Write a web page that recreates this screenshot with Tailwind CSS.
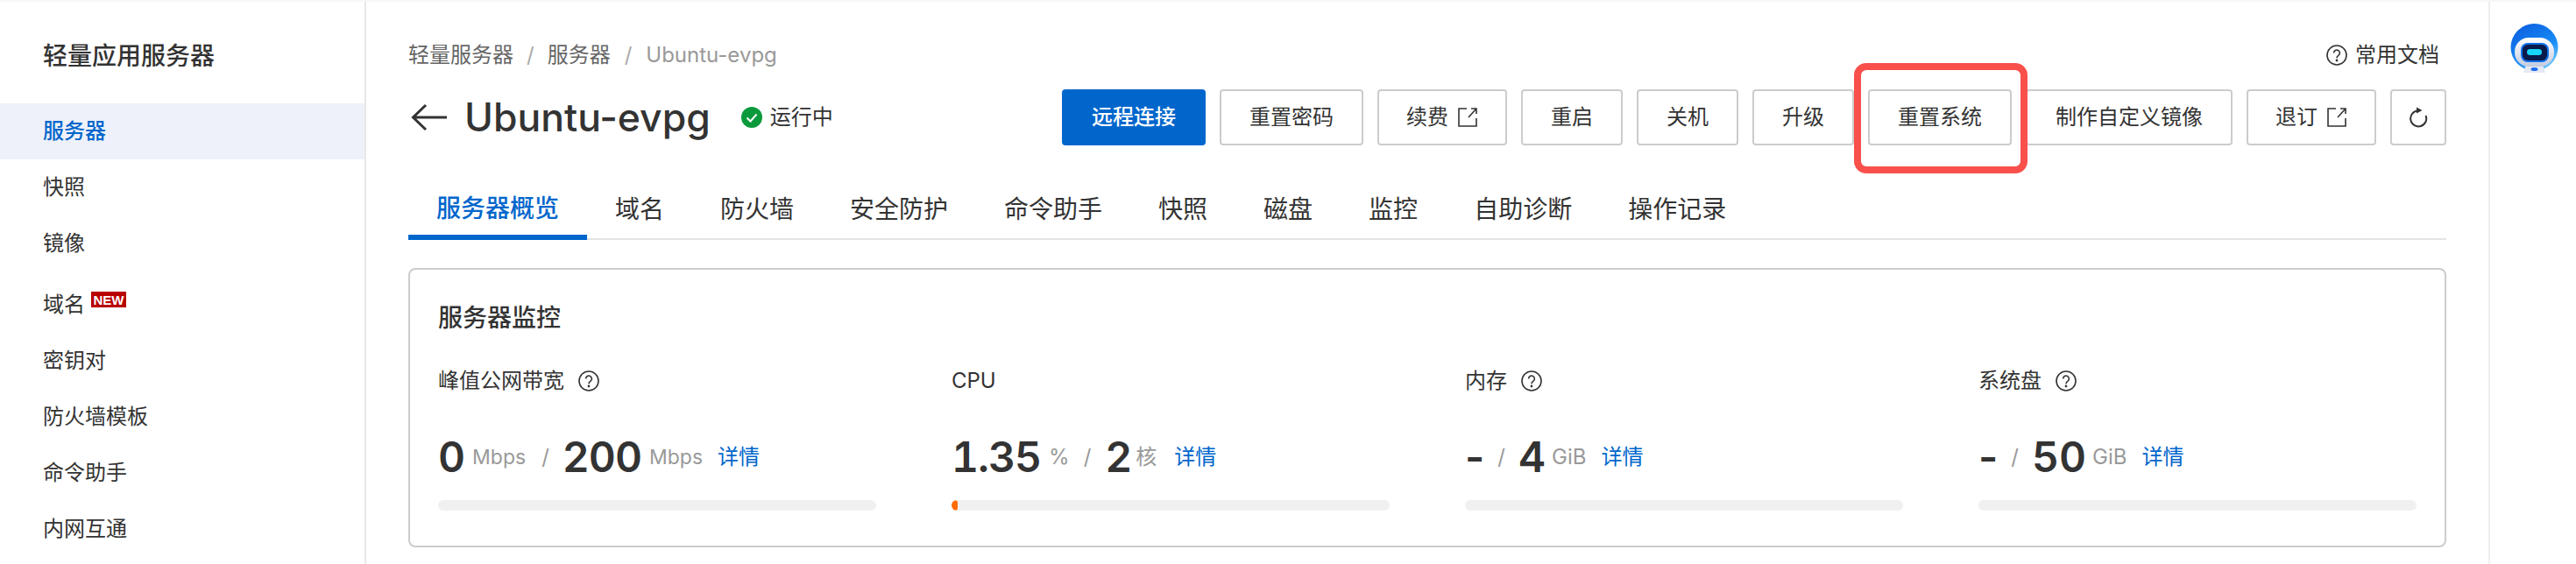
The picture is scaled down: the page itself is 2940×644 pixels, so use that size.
<!DOCTYPE html>
<html lang="zh-CN">
<head>
<meta charset="utf-8">
<script src="https://cdn.jsdelivr.net/npm/@tailwindcss/browser@4"></script>
<title>Ubuntu-evpg</title>
</head>
<body class="bg-white">
<div class="relative flex h-[644px] w-[2940px] overflow-hidden bg-white text-[24px] text-[#333] font-['Inter','Noto_Sans_CJK_SC',sans-serif]">

  <aside class="w-[418px] shrink-0 border-r-2 border-[#e8e8e8] pt-[44px]">
    <div class="flex h-[40px] items-center pl-[49px] text-[28px] font-medium">轻量应用服务器</div>
    <nav class="mt-[34px] flex flex-col">
      <a class="flex h-[64px] items-center bg-[#eef1f9] pl-[49px] font-medium text-[#0066cc]">服务器</a>
      <a class="flex h-[64px] items-center pl-[49px]">快照</a>
      <a class="flex h-[64px] items-center pl-[49px]">镜像</a>
      <a class="flex h-[70px] items-center pl-[49px] pt-[6px]">域名<span class="ml-[7px] mb-[12px] flex h-[18px] w-[40px] items-center justify-center bg-[#b80000] text-[15px] leading-none font-bold text-white font-['Liberation_Sans',sans-serif]">NEW</span></a>
      <a class="flex h-[64px] items-center pl-[49px]">密钥对</a>
      <a class="flex h-[64px] items-center pl-[49px]">防火墙模板</a>
      <a class="flex h-[64px] items-center pl-[49px]">命令助手</a>
      <a class="flex h-[64px] items-center pl-[49px]">内网互通</a>
    </nav>
  </aside>

  <main class="w-[2326px] shrink-0 ml-[48px] pt-[47px]">
    <div class="flex h-[32px] items-center justify-between">
      <div class="flex items-center">
        <span class="text-[#666]">轻量服务器</span>
        <span class="mx-[15px] text-[#aaa]">/</span>
        <span class="text-[#666]">服务器</span>
        <span class="mx-[16px] text-[#aaa]">/</span>
        <span class="text-[#999]">Ubuntu-evpg</span>
      </div>
      <div class="mr-[8px] flex items-center gap-[9px] text-[#333]">
        <svg class="h-[24px] w-[24px]" viewBox="0 0 24 24" fill="none" stroke="#333" stroke-width="1.6"><circle cx="12" cy="12" r="11"/><path d="M8.600 9.400a3.400 3.400 0 1 1 5.400 2.800c-1.300.9-2 1.500-2 3"/><circle cx="12" cy="18" r=".6" fill="#333"/></svg>
        <span>常用文档</span>
      </div>
    </div>

    <div class="mt-[23px] flex h-[64px] items-center justify-between">
      <div class="flex items-center">
        <svg class="ml-[2px] h-[32px] w-[42px]" viewBox="0 0 42 32" fill="none" stroke="#333" stroke-width="3"><path d="M42 16H3M18 2 3.500 16 18 30"/></svg>
        <h1 class="ml-[20px] text-[44.500px] leading-none font-medium">Ubuntu-evpg</h1>
        <svg class="ml-[35px] h-[24px] w-[24px]" viewBox="0 0 24 24"><circle cx="12" cy="12" r="12" fill="#0a9a3c"/><path d="M6.500 12.500l4 4 7-8" fill="none" stroke="#fff" stroke-width="2"/></svg>
        <span class="ml-[9px]">运行中</span>
      </div>
      <div class="flex h-[64px] gap-[16px]">
        <button class="h-[64px] w-[164px] rounded-[4px] bg-[#0066cc] font-medium text-white">远程连接</button>
        <button class="h-[64px] w-[164px] rounded-[4px] border-2 border-[#ccc]">重置密码</button>
        <button class="flex h-[64px] w-[148px] items-center justify-center gap-[10px] rounded-[4px] border-2 border-[#ccc]">续费
          <svg class="h-[24px] w-[24px]" viewBox="0 0 24 24" fill="none" stroke="#333" stroke-width="1.6"><path d="M11 2H2v20h20v-9M22 2l-9 10M16 2h6v6"/></svg>
        </button>
        <button class="h-[64px] w-[116px] rounded-[4px] border-2 border-[#ccc]">重启</button>
        <button class="h-[64px] w-[116px] rounded-[4px] border-2 border-[#ccc]">关机</button>
        <button class="h-[64px] w-[116px] rounded-[4px] border-2 border-[#ccc]">升级</button>
        <button class="h-[64px] w-[164px] rounded-[4px] border-2 border-[#ccc]">重置系统</button>
        <button class="h-[64px] w-[236px] rounded-[4px] border-2 border-[#ccc]">制作自定义镜像</button>
        <button class="flex h-[64px] w-[148px] items-center justify-center gap-[10px] rounded-[4px] border-2 border-[#ccc]">退订
          <svg class="h-[24px] w-[24px]" viewBox="0 0 24 24" fill="none" stroke="#333" stroke-width="1.6"><path d="M11 2H2v20h20v-9M22 2l-9 10M16 2h6v6"/></svg>
        </button>
        <button class="flex h-[64px] w-[64px] items-center justify-center rounded-[4px] border-2 border-[#ccc]">
          <svg class="h-[24px] w-[24px]" viewBox="0 0 24 24" fill="none"><path d="M11 4.500A9 9 0 1 0 20.500 10" stroke="#333" stroke-width="2"/><path d="M10 .5 16.500 4 10 7.500z" fill="#333"/></svg>
        </button>
      </div>
    </div>

    <div class="mt-[36px] flex h-[72px] border-b-2 border-[#e4e4e4] text-[28px]">
      <a class="-mb-[2px] flex h-[72px] items-center border-b-[6px] border-[#0066cc] px-[32px] pt-[6px] font-medium text-[#0066cc]">服务器概览</a>
      <a class="flex items-center px-[32px] pt-[4px]">域名</a>
      <a class="flex items-center px-[32px] pt-[4px]">防火墙</a>
      <a class="flex items-center px-[32px] pt-[4px]">安全防护</a>
      <a class="flex items-center px-[32px] pt-[4px]">命令助手</a>
      <a class="flex items-center px-[32px] pt-[4px]">快照</a>
      <a class="flex items-center px-[32px] pt-[4px]">磁盘</a>
      <a class="flex items-center px-[32px] pt-[4px]">监控</a>
      <a class="flex items-center px-[32px] pt-[4px]">自助诊断</a>
      <a class="flex items-center px-[32px] pt-[4px]">操作记录</a>
    </div>

    <section class="mt-[32px] h-[319px] rounded-[8px] border-2 border-[#ccc] px-[32px] pt-[35px]">
      <h2 class="flex h-[40px] items-center text-[28px] font-medium">服务器监控</h2>
      <div class="mt-[36px] grid grid-cols-4 gap-x-[86px]">
        <div>
          <div class="flex h-[32px] items-center gap-[16px]">峰值公网带宽
            <svg class="h-[24px] w-[24px]" viewBox="0 0 24 24" fill="none" stroke="#333" stroke-width="1.6"><circle cx="12" cy="12" r="11"/><path d="M8.600 9.400a3.400 3.400 0 1 1 5.400 2.800c-1.300.9-2 1.500-2 3"/><circle cx="12" cy="18" r=".6" fill="#333"/></svg>
          </div>
          <div class="mt-[43px] flex h-[56px] items-center">
            <span class="text-[48px] leading-none font-semibold tabular-nums">0</span>
            <span class="ml-[8px] text-[23px] text-[#999]">Mbps</span>
            <span class="ml-[18px] mr-[15px] text-[#999]">/</span>
            <span class="text-[48px] leading-none font-semibold tabular-nums tracking-[-1px]">200</span>
            <span class="ml-[9px] text-[23px] text-[#999]">Mbps</span>
            <a class="ml-[17px] text-[#0066cc]">详情</a>
          </div>
          <div class="mt-[21px] h-[12px] overflow-hidden rounded-full bg-[#f0f0f0]"></div>
        </div>
        <div>
          <div class="flex h-[32px] items-center">CPU</div>
          <div class="mt-[43px] flex h-[56px] items-center">
            <span class="text-[48px] leading-none font-semibold tabular-nums tracking-[-1px]">1.35</span>
            <span class="ml-[9px] text-[#999]">%</span>
            <span class="mx-[16px] text-[#999]">/</span>
            <span class="text-[48px] leading-none font-semibold tabular-nums">2</span>
            <span class="ml-[4px] text-[#999]">核</span>
            <a class="ml-[20px] text-[#0066cc]">详情</a>
          </div>
          <div class="mt-[21px] h-[12px] overflow-hidden rounded-full bg-[#f0f0f0]"><div class="h-full w-[7px] rounded-full bg-[#ff6a00]"></div></div>
        </div>
        <div>
          <div class="flex h-[32px] items-center gap-[16px]">内存
            <svg class="h-[24px] w-[24px]" viewBox="0 0 24 24" fill="none" stroke="#333" stroke-width="1.6"><circle cx="12" cy="12" r="11"/><path d="M8.600 9.400a3.400 3.400 0 1 1 5.400 2.800c-1.300.9-2 1.500-2 3"/><circle cx="12" cy="18" r=".6" fill="#333"/></svg>
          </div>
          <div class="mt-[43px] flex h-[56px] items-center">
            <span class="text-[48px] leading-none font-semibold">-</span>
            <span class="mx-[15px] text-[#999]">/</span>
            <span class="text-[48px] leading-none font-semibold tabular-nums">4</span>
            <span class="ml-[7px] text-[#999]">GiB</span>
            <a class="ml-[17px] text-[#0066cc]">详情</a>
          </div>
          <div class="mt-[21px] h-[12px] overflow-hidden rounded-full bg-[#f0f0f0]"></div>
        </div>
        <div>
          <div class="flex h-[32px] items-center gap-[16px]">系统盘
            <svg class="h-[24px] w-[24px]" viewBox="0 0 24 24" fill="none" stroke="#333" stroke-width="1.6"><circle cx="12" cy="12" r="11"/><path d="M8.600 9.400a3.400 3.400 0 1 1 5.400 2.800c-1.300.9-2 1.500-2 3"/><circle cx="12" cy="18" r=".6" fill="#333"/></svg>
          </div>
          <div class="mt-[43px] flex h-[56px] items-center">
            <span class="text-[48px] leading-none font-semibold">-</span>
            <span class="mx-[15px] text-[#999]">/</span>
            <span class="text-[48px] leading-none font-semibold tabular-nums">50</span>
            <span class="ml-[7px] text-[#999]">GiB</span>
            <a class="ml-[17px] text-[#0066cc]">详情</a>
          </div>
          <div class="mt-[21px] h-[12px] overflow-hidden rounded-full bg-[#f0f0f0]"></div>
        </div>
      </div>
    </section>
  </main>

  <aside class="ml-[48px] flex-1 border-l-2 border-[#eee] pt-[23px]">
    <svg class="ml-[20px] h-[60px] w-[60px]" viewBox="0 0 60 60">
      <defs>
        <linearGradient id="bg" x1="0.2" y1="0" x2="0.8" y2="1"><stop offset="0" stop-color="#0a5fe0"/><stop offset="0.6" stop-color="#1a8cf5"/><stop offset="1" stop-color="#7fd0ff"/></linearGradient>
        <linearGradient id="hd" x1="0" y1="0" x2="0" y2="1"><stop offset="0" stop-color="#ffffff"/><stop offset="1" stop-color="#c3cbe0"/></linearGradient>
      </defs>
      <circle cx="30.500" cy="31" r="27" fill="url(#bg)"/>
      <path d="M21 51h19l3 9H18z" fill="#e6eaf4"/>
      <ellipse cx="30.500" cy="56" rx="4" ry="2" fill="#1c6cf0"/>
      <rect x="8" y="20" width="45" height="33" rx="16" fill="url(#hd)"/>
      <rect x="15" y="26" width="32" height="22" rx="8" fill="#0f6fe8"/>
      <rect x="17" y="28" width="28" height="18" rx="6" fill="#0a1a4a"/>
      <rect x="22" y="33" width="17" height="7" rx="3.500" fill="#18d4f8"/>
    </svg>
  </aside>

  <div class="pointer-events-none absolute left-[2116px] top-[72px] h-[126px] w-[198px] rounded-[14px] border-[8px] border-[#f9504b]"></div>
  <div class="pointer-events-none absolute left-0 top-0 h-[2px] w-full bg-[#f7f7f7]"></div>
</div>
</body>
</html>
